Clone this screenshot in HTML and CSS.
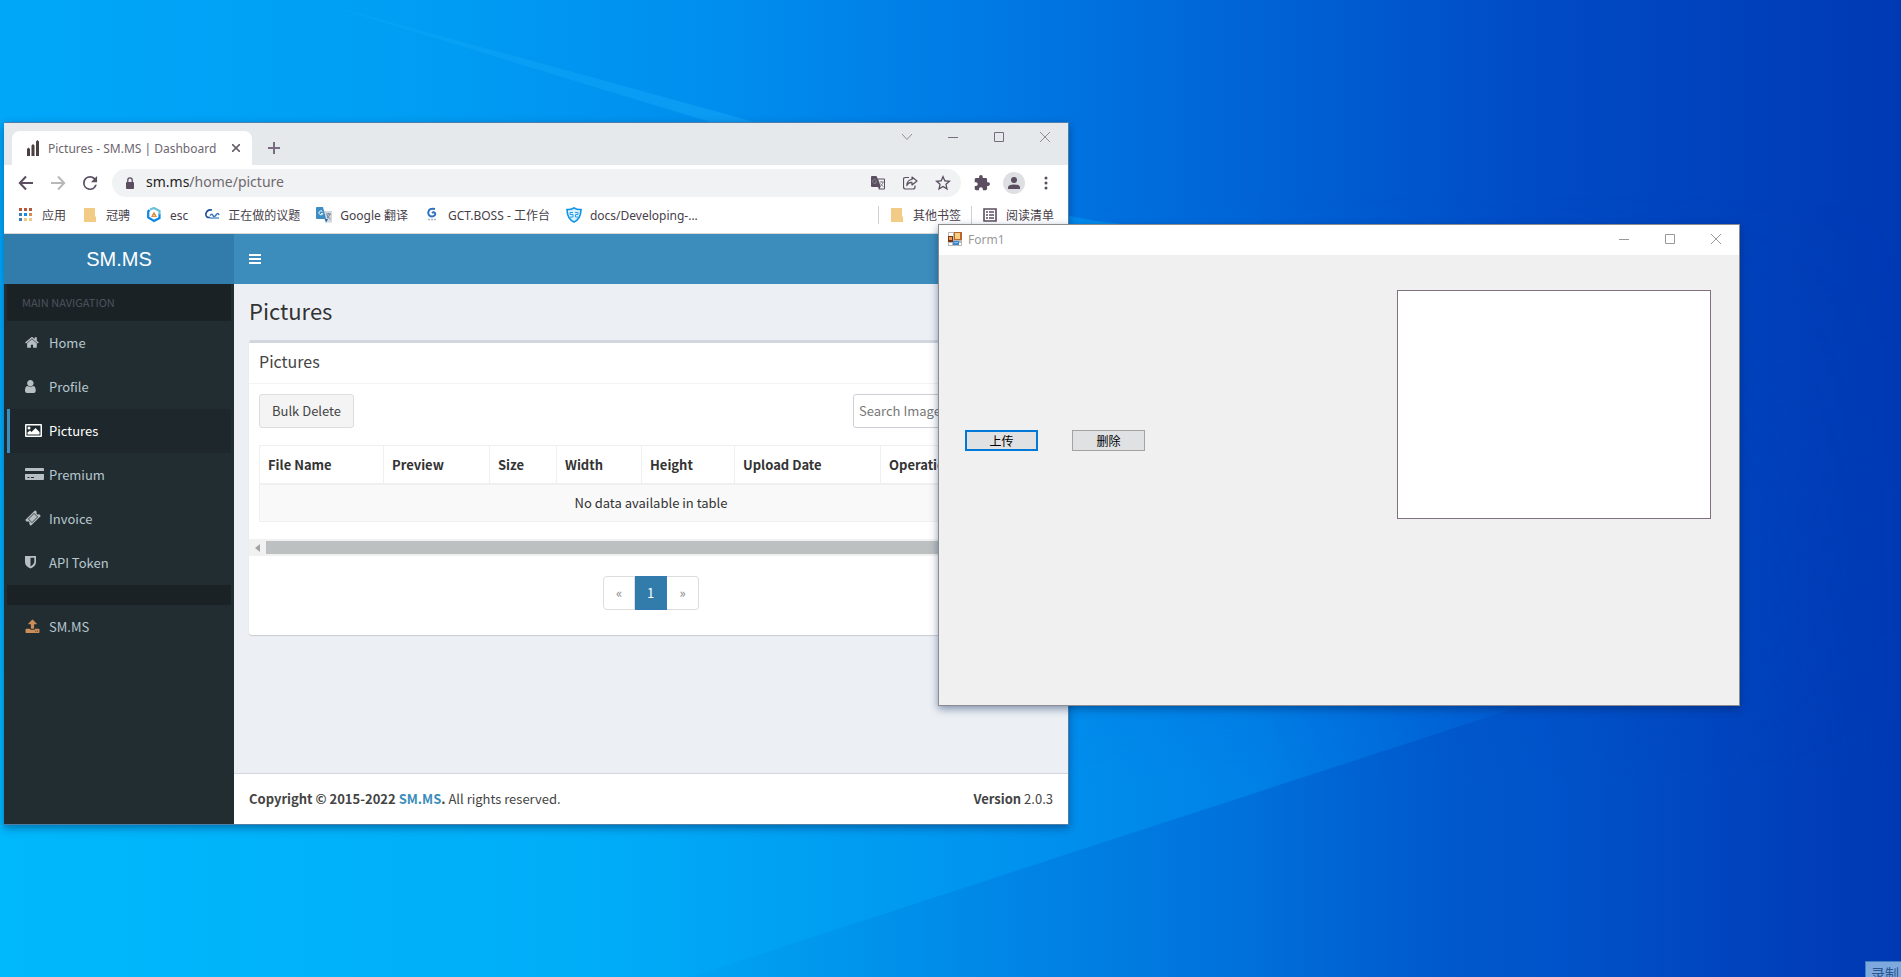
FILE: index.html
```html
<!DOCTYPE html>
<html lang="zh-CN">
  <head>
    <meta charset="utf-8" />
    <title>Pictures - SM.MS | Dashboard</title>
    <link rel="stylesheet" href="styles.css">
  </head>
  <body>
    <div class="desktop">
      <svg class="wallpaper" viewBox="0 0 1901 977" preserveAspectRatio="none" aria-hidden="true">
        <defs>
          <linearGradient id="sky" x1="0" y1="0" x2="1" y2="0">
            <stop offset="0" stop-color="#00a7f9" />
            <stop offset=".2" stop-color="#009ff4" />
            <stop offset=".38" stop-color="#008eee" />
            <stop offset=".55" stop-color="#0075e2" />
            <stop offset=".68" stop-color="#0060d4" />
            <stop offset=".8" stop-color="#004cc6" />
            <stop offset="1" stop-color="#0039b4" />
          </linearGradient>
          <linearGradient id="glow" x1="0" y1="0" x2="1" y2="0">
            <stop offset="0" stop-color="#00b8fc" />
            <stop offset=".3" stop-color="#00aef8" />
            <stop offset=".5" stop-color="#0097f0" />
            <stop offset=".66" stop-color="#0081e6" />
            <stop offset=".8" stop-color="#0062d6" stop-opacity=".7" />
            <stop offset="1" stop-color="#0039b4" stop-opacity="0" />
          </linearGradient>
          <linearGradient id="fade" x1="0" y1="0" x2="0" y2="1">
            <stop offset=".2" stop-color="#000" />
            <stop offset=".8" stop-color="#fff" />
          </linearGradient>
          <linearGradient id="shade" x1="690" y1="0" x2="1720" y2="0" gradientUnits="userSpaceOnUse">
            <stop offset="0" stop-color="#0070d0" stop-opacity=".05" />
            <stop offset=".4" stop-color="#0062d0" stop-opacity=".35" />
            <stop offset=".75" stop-color="#0050c4" stop-opacity=".6" />
            <stop offset="1" stop-color="#0044bc" stop-opacity="0" />
          </linearGradient>
          <linearGradient id="beam" x1="300" y1="0" x2="1150" y2="0" gradientUnits="userSpaceOnUse">
            <stop offset="0" stop-color="#20b4ff" stop-opacity=".1" />
            <stop offset=".5" stop-color="#20b4ff" stop-opacity=".35" />
            <stop offset="1" stop-color="#0098f8" stop-opacity="0" />
          </linearGradient>
          <mask id="lower"><rect width="1901" height="977" fill="url(#fade)" /></mask>
        </defs>
        <rect width="1901" height="977" fill="url(#sky)" />
        <rect width="1901" height="977" fill="url(#glow)" mask="url(#lower)" />
        <path d="M310 0L740 118L1140 234L1060 234L710 122Z" fill="url(#beam)" />
        <path d="M1060 213Q1085 222 1150 226L1060 226Z" fill="#00a0f8" opacity=".5" />
        <path d="M690 977L1525 705L1720 642V977Z" fill="url(#shade)" />
      </svg>

      <section class="window browser" aria-label="Pictures - SM.MS | Dashboard">
        <div class="tab-strip">
          <div class="tab">
            <svg class="favicon" viewBox="0 0 12 16"><path d="M0 9l1.500-1.500L3 9v7H0zM4.500 5.500L6 4l1.500 1.500V16h-3zM9 1.500L10.500 0 12 1.500V16H9z" fill="#4a4040" /></svg>
            <span class="tab-title">Pictures - SM.MS | Dashboard</span>
            <button class="plain tab-close" aria-label="Close tab"><svg width="8" height="8" viewBox="0 0 8 8"><path d="M0 0l8 8M8 0L0 8" stroke="#6a606c" stroke-width="1.600" /></svg></button>
          </div>
          <button class="plain new-tab" aria-label="New tab"><svg width="12" height="12" viewBox="0 0 12 12"><path d="M6 0v12M0 6h12" stroke="#7a6c80" stroke-width="2" /></svg></button>
          <div class="caption-buttons">
            <button class="plain" aria-label="Search tabs"><svg width="10" height="10" viewBox="0 0 10 10"><path d="M0 2l5 5.500L10 2" fill="none" stroke="#938c98" /></svg></button>
            <button class="plain" aria-label="Minimize"><svg width="10" height="10" viewBox="0 0 10 10"><path d="M0 5.500h10" stroke="#7a6c80" /></svg></button>
            <button class="plain" aria-label="Maximize"><svg width="10" height="10" viewBox="0 0 10 10"><path d="M.5.5h9v9h-9z" fill="none" stroke="#7a6c80" /></svg></button>
            <button class="plain" aria-label="Close"><svg width="10" height="10" viewBox="0 0 10 10"><path d="M0 0l10 10M10 0L0 10" stroke="#938c98" /></svg></button>
          </div>
        </div>

        <div class="toolbar">
          <button class="plain nav-button" aria-label="Back"><svg width="16" height="16" viewBox="0 0 16 16"><path d="M15 8H2M8 1.500L1.800 8 8 14.500" fill="none" stroke="#5a4e60" stroke-width="2" /></svg></button>
          <button class="plain nav-button" aria-label="Forward"><svg width="16" height="16" viewBox="0 0 16 16"><path d="M1 8h13M8 1.500L14.200 8 8 14.500" fill="none" stroke="#b8b8ba" stroke-width="2" /></svg></button>
          <button class="plain nav-button" aria-label="Reload"><svg width="24" height="24" viewBox="0 0 24 24"><path d="M17.650 6.350A7.960 7.960 0 0 0 12 4a8 8 0 1 0 7.730 10h-2.080A6 6 0 1 1 12 6c1.660 0 3.140.69 4.220 1.780L13 11h7V4z" fill="#5a4e60" transform="translate(1.500 1.500) scale(.88)" /></svg></button>
          <div class="address">
            <svg class="lock" width="8" height="12" viewBox="0 0 8 12"><path d="M1 5h6q1 0 1 1v5q0 1-1 1H1q-1 0-1-1V6q0-1 1-1z" fill="#5a4e60" /><path d="M1.800 5V3a2.200 2.200 0 0 1 4.400 0V5" fill="none" stroke="#5a4e60" stroke-width="1.300" /></svg>
            <span class="url"><b>sm.ms</b>/home/picture</span>
            <button class="plain" aria-label="Translate"><svg width="15" height="14" viewBox="0 0 15 14"><path d="M1 0h4.500l1 2.500H13q1 0 1 1v9q0 1-1 1H8L7 11H1q-1 0-1-1V1q0-1 1-1z" fill="#5a4e60" /><path d="M7.200 3.500h5.800v9H8.700l1-2z" fill="#f1f2f4" /><path d="M5.200 4.200a2 2 0 1 0 .4 1.600H4M8.500 6h4.500M10.800 5v1M12.300 6q-1 3-3 4M9.500 7.500q1 2 3 3" fill="none" stroke="#8c8490" /></svg></button>
            <button class="plain" aria-label="Share"><svg width="15" height="14" viewBox="0 0 15 14"><path d="M6 1.500H2.500q-2 0-2 2v7.500q0 2 2 2H10q2 0 2-2V9.500" fill="none" stroke="#5a4e60" stroke-width="1.200" /><path d="M9 1l5 4-5 4V6.500Q5.500 6.200 3.800 9.500 4 4 9 3.500z" fill="none" stroke="#5a4e60" stroke-width="1.200" stroke-linejoin="round" /></svg></button>
            <button class="plain" aria-label="Bookmark"><svg width="16" height="16" viewBox="2 2 20 20"><path d="M22 9.240l-7.190-.62L12 2 9.190 8.630 2 9.240l5.460 4.730L5.820 21 12 17.270 18.180 21l-1.630-7.030zM12 15.400l-3.760 2.270 1-4.280-3.320-2.880 4.380-.38L12 6.100l1.710 4.040 4.380.38-3.320 2.880 1 4.280z" fill="#5a4e60" /></svg></button>
          </div>
          <button class="plain ext-button" aria-label="Extensions"><svg width="16" height="16" viewBox="1 1 22 22"><path d="M20.500 11H19V7a2 2 0 0 0-2-2h-4V3.500a2.500 2.500 0 0 0-5 0V5H4a2 2 0 0 0-2 2v3.800h1.500a2.700 2.700 0 0 1 0 5.400H2V20a2 2 0 0 0 2 2h3.800v-1.500a2.700 2.700 0 0 1 5.400 0V22H17a2 2 0 0 0 2-2v-4h1.500a2.500 2.500 0 0 0 0-5z" fill="#5a4e60" /></svg></button>
          <button class="plain avatar" aria-label="Profile"><svg width="12" height="12" viewBox="0 0 12 12"><circle cx="6" cy="3" r="3" fill="#5a4e60" /><path d="M0 12v-1.500Q0 7.500 6 7.500t6 3V12z" fill="#5a4e60" /></svg></button>
          <button class="plain menu-button" aria-label="Menu"><svg width="4" height="14" viewBox="0 0 4 14"><g fill="#5a4e60"><circle cx="2" cy="2" r="1.500" /><circle cx="2" cy="7" r="1.500" /><circle cx="2" cy="12" r="1.500" /></g></svg></button>
        </div>

        <nav class="bookmarks" aria-label="Bookmarks">
          <a href="#"><svg viewBox="0 0 16 16"><path d="M1 1h3v3H1zM6 1h3v3H6zM11 1h3v3h-3z" fill="#b5583c" /><path d="M1 6h3v3H1z" fill="#3f7fb0" /><path d="M6 6h3v3H6z" fill="#0a8ff0" /><path d="M11 6h3v3h-3z" fill="#d48a50" /><path d="M1 11h3v3H1z" fill="#3f7fb0" /><path d="M6 11h3v3H6zM11 11h3v3h-3z" fill="#f0c888" /></svg>应用</a>
          <a href="#"><svg viewBox="0 0 16 16"><path d="M2 1h11v8.500h1V15H2z" fill="#f2cb86" /></svg>冠骋</a>
          <a href="#"><svg viewBox="0 0 16 16"><path d="M4 2.500L8 1l5.500 3v4" fill="none" stroke="#6cc0dc" stroke-width="2.200" /><path d="M3.500 3L2.200 4.500v6L8 14l5.500-3V7.500" fill="none" stroke="#0b86e4" stroke-width="2.200" /><path d="M8 4.500l3 5.500H5z" fill="#d8883c" /><path d="M7.500 8h1v1.200h-1z" fill="#fff" /></svg>esc</a>
          <a href="#"><svg viewBox="0 0 16 16"><path d="M8 3Q3 2 1.800 7q0 4 4.200 3.500" fill="none" stroke="#1c4f94" stroke-width="1.600" /><path d="M6 8.500Q8 6 9 8.500T12 8t3 0" fill="none" stroke="#3c74b8" stroke-width="1.500" /><path d="M6 11h9" stroke="#7fb0dc" stroke-width="2" /></svg>正在做的议题</a>
          <a href="#"><svg viewBox="0 0 16 16"><path d="M6 4h10v11.500H9z" fill="#d3d8e0" /><path d="M0 1q0-1 1-1h6l3 12H1q-1 0-1-1z" fill="#3c8dc4" /><path d="M9 12l1 3.500L12 12z" fill="#1f6098" /><path d="M6.500 4.600a2 2 0 1 0 .3 2H5" fill="none" stroke="#fff" /><path d="M10 7h5M12.500 6v1M14 7q-1 3-3 4M11 8q1 3 3.500 4" fill="none" stroke="#707f92" /></svg>Google 翻译</a>
          <a href="#"><svg viewBox="0 0 16 16"><path d="M11 2Q5 .5 4.200 5.500 4.500 10 9 9.300q3-.8 2-3.300-1.500-1.500-3 .2" fill="none" stroke="#2f72c0" stroke-width="2" /><path d="M4 12.500h8" stroke="#aab4c4" stroke-width="1.500" stroke-dasharray="2 1" /></svg>GCT.BOSS - 工作台</a>
          <a href="#"><svg viewBox="0 0 16 16"><path d="M8 .8Q11 2.800 15 2.500 14.800 12 8 15 1.200 12 1 2.500 5 2.800 8 .8z" fill="#d9effc" stroke="#0b93e6" stroke-width="1.600" /><path d="M7 5.500H4v2h3v2.500H4M9 5.500h3v2H9.500V10H12" fill="none" stroke="#2aa0e8" /></svg>docs/Developing-...</a>
          <span class="bookmark-spacer"></span>
          <a class="divided" href="#"><svg viewBox="0 0 16 16"><path d="M2 1h11v8.500h1V15H2z" fill="#f2cb86" /></svg>其他书签</a>
          <a class="divided" href="#"><svg viewBox="0 0 16 16"><path d="M2 2h12v12H2z" fill="none" stroke="#5a4e60" stroke-width="1.600" /><path d="M4 5h2M7 5h5M4 8h2M7 8h5M4 11h2M7 11h5" stroke="#5a4e60" stroke-width="1.400" /></svg>阅读清单</a>
        </nav>

        <div class="page">
          <aside class="sidebar">
            <a class="logo" href="#">SM.MS</a>
            <ul class="sidebar-menu">
              <li class="header">MAIN NAVIGATION</li>
              <li><a href="#"><svg viewBox="0 0 1792 1792"><path d="M1408 992v480q0 26-19 45t-45 19h-384v-384h-256v384h-384q-26 0-45-19t-19-45v-480l1-6 575-474 575 474zm223-69l-62 74q-8 9-21 11h-3q-13 0-21-7l-692-577-692 577q-12 8-24 7-13-2-21-11l-62-74q-8-10-7-23t11-22l719-599q32-26 76-26t76 26l244 204v-195q0-14 9-23t23-9h192q14 0 23 9t9 23v408l219 182q10 8 11 22t-7 23z" /></svg>Home</a></li>
              <li><a href="#"><svg viewBox="256 0 1792 1792"><path d="M1536 1399q0 109-62 187t-151 78H469q-88 0-150-78t-63-187q0-85 9-160t31-152 59-131 94-89 134-35q131 128 313 128t313-128q76 0 134 35t94 89 59 131 31 152 9 160zM1280 512q0 159-112 272T896 896 624 784 512 512t112-272 272-112 272 112 112 272z" /></svg>Profile</a></li>
              <li class="active"><a href="#"><svg viewBox="0 0 20 16"><path fill-rule="evenodd" d="M1 2h15q1 0 1 1v11q0 1-1 1H1q-1 0-1-1V3q0-1 1-1zm.500 1.500v10h14v-10z" /><circle cx="4" cy="6" r="1.500" /><path d="M2.500 12.500v-2L5 8.500l1.500 1.500 4-4 4 4v2.500z" /></svg>Pictures</a></li>
              <li><a href="#"><svg viewBox="0 0 20 16"><path d="M1 2h17q1 0 1 1v2H0V3q0-1 1-1zM0 8h19v5q0 1-1 1H1q-1 0-1-1z" /><path d="M2.500 11.500h2M6 11.500h3" stroke="#222d32" /></svg>Premium</a></li>
              <li><a href="#"><svg viewBox="0 0 20 16"><g transform="rotate(-45 8 8)"><path d="M1 4h14v2.500a1.500 1.500 0 0 0 0 3V12H1V9.500a1.500 1.500 0 0 0 0-3z" /><path d="M4 5.500h8v5H4z" fill="none" stroke="#222d32" stroke-width=".8" /></g></svg>Invoice</a></li>
              <li><a href="#"><svg viewBox="0 0 20 16"><path fill-rule="evenodd" d="M0 2h11v6q0 4-5.500 6.500Q0 12 0 8zm5.500 1.800v8.600Q9.300 10 9.300 8V3.800z" /></svg>API Token</a></li>
              <li class="header empty"></li>
              <li class="orange"><a href="#"><svg viewBox="0 0 1792 1792"><path d="M1728 1248v320q0 40-28 68t-68 28H160q-40 0-68-28t-28-68v-320q0-40 28-68t68-28h427q21 56 71 92t110 36h256q61 0 111-36t70-92h427q40 0 68 28t28 68zM1403 600q-17 40-59 40h-256v448q0 26-19 45t-45 19H768q-26 0-45-19t-19-45V640H448q-42 0-59-40-17-39 14-69l448-448q18-19 45-19t45 19l448 448q31 30 14 69z" /><path d="M1220 1450h110M1450 1450h110" stroke="#222d32" stroke-width="100" /></svg>SM.MS</a></li>
            </ul>
          </aside>

          <div class="main">
            <div class="navbar">
              <button class="plain toggle" aria-label="Toggle navigation"><svg width="12" height="10" viewBox="0 0 12 10"><path d="M0 1h12M0 5h12M0 9h12" stroke="#fff" stroke-width="2" /></svg></button>
            </div>
            <main class="content">
              <h1>Pictures</h1>
              <section class="box">
                <h2>Pictures</h2>
                <div class="box-body">
                  <div class="actions">
                    <button class="bulk-delete">Bulk Delete</button>
                    <input class="search" type="text" placeholder="Search Image" aria-label="Search Image" />
                  </div>
                  <table class="files">
                    <colgroup>
                      <col class="col-name" /><col class="col-preview" /><col class="col-size" /><col class="col-width" /><col class="col-height" /><col class="col-date" /><col />
                    </colgroup>
                    <thead>
                      <tr><th>File Name</th><th>Preview</th><th>Size</th><th>Width</th><th>Height</th><th>Upload Date</th><th>Operation</th></tr>
                    </thead>
                    <tbody>
                      <tr><td colspan="7">No data available in table</td></tr>
                    </tbody>
                  </table>
                </div>
                <div class="scrollbar" aria-hidden="true">
                  <svg width="5" height="8" viewBox="0 0 5 8"><path d="M5 0v8L0 4z" fill="#a3a3a3" /></svg>
                  <div class="thumb"></div>
                </div>
                <nav class="pagination" aria-label="Pages">
                  <a href="#">«</a><a class="current" href="#">1</a><a href="#">»</a>
                </nav>
              </section>
            </main>
            <footer class="footer">
              <span><strong>Copyright © 2015-2022 <a href="#">SM.MS</a>.</strong> All rights reserved.</span>
              <span><strong>Version</strong> 2.0.3</span>
            </footer>
          </div>
        </div>
      </section>

      <section class="window form" aria-label="Form1">
        <div class="title-bar">
          <svg width="14" height="14" viewBox="0 0 14 14"><path d="M0 0h14v14H0z" fill="#b9b9b9" /><path d="M1 1h4v3H1zM1 11h3v2H1zM11 11h2v2h-2z" fill="#fff" /><path d="M6 0h8v8H6z" fill="#b86430" /><path d="M7 1h5v6H7z" fill="#f4cf80" /><path d="M0 4h5v6H0z" fill="#7a3418" /><path d="M1 5h3v3H1z" fill="#e89a50" /><path d="M5 9h6v4H5z" fill="#3c86cc" /><path d="M6 10h4v1H6z" fill="#8cc0ee" /></svg>
          <span>Form1</span>
          <div class="caption-buttons">
            <button class="plain" aria-label="Minimize"><svg width="10" height="10" viewBox="0 0 10 10"><path d="M0 5.500h10" stroke="#999" /></svg></button>
            <button class="plain" aria-label="Maximize"><svg width="10" height="10" viewBox="0 0 10 10"><path d="M.5.5h9v9h-9z" fill="none" stroke="#999" /></svg></button>
            <button class="plain" aria-label="Close"><svg width="10" height="10" viewBox="0 0 10 10"><path d="M0 0l10 10M10 0L0 10" stroke="#999" /></svg></button>
          </div>
        </div>
        <div class="form-body">
          <div class="form-buttons">
            <button class="default">上传</button>
            <button>删除</button>
          </div>
          <div class="picture-box"></div>
        </div>
      </section>

      <button class="record">录制</button>
    </div>
  </body>
</html>
```
FILE: styles.css
```css
* {
  box-sizing: border-box;
}
body {
  margin: 0;
  font-family: 'Noto Sans CJK SC', sans-serif;
  font-size: 13px;
  color: #333;
}
a {
  color: inherit;
  text-decoration: none;
}
button,
input {
  font: inherit;
  color: inherit;
}
svg {
  flex: none;
}
.desktop {
  position: relative;
  height: 100vh;
  overflow: hidden;
  background: #0078e0;
}
.wallpaper {
  display: block;
  width: 100%;
  height: 100%;
}
.window {
  position: absolute;
  display: flex;
  flex-direction: column;
  box-shadow: 0 3px 8px rgba(0, 30, 80, 0.45);
}
.plain {
  display: flex;
  align-items: center;
  justify-content: center;
  padding: 0;
  border: 0;
  background: none;
}

/* browser window */
.browser {
  left: 4px;
  top: 122px;
  width: 1065px;
  height: 703px;
  border: 1px solid #4d7fa8;
  border-left: 0;
  background: #fff;
}
.tab-strip {
  display: flex;
  height: 42px;
  padding: 8px 0 0 8px;
  background: #e6e9ec;
  font-family: 'Noto Sans', 'Noto Sans CJK SC', sans-serif;
  font-size: 12px;
}
.tab {
  display: flex;
  align-items: center;
  width: 240px;
  padding: 0 12px 0 15px;
  border-radius: 8px 8px 0 0;
  background: #fff;
  color: #6d6570;
}
.favicon {
  width: 12px;
  height: 16px;
  margin-right: 9px;
}
.tab-title {
  flex: 1;
  white-space: nowrap;
}
.new-tab {
  width: 44px;
}
.caption-buttons {
  display: flex;
  margin-left: auto;
}
.caption-buttons .plain {
  width: 46px;
}
.tab-strip .caption-buttons {
  height: 12px;
}
.toolbar {
  display: flex;
  align-items: center;
  height: 36px;
  padding: 0 12px 0 6px;
}
.nav-button {
  width: 32px;
}
.address {
  display: flex;
  flex: 1;
  align-items: center;
  gap: 17px;
  height: 28px;
  margin-left: 6px;
  padding: 0 10px 0 14px;
  border-radius: 14px;
  background: #f1f2f4;
}
.lock {
  margin-right: -5px;
}
.url {
  flex: 1;
  font-family: 'Noto Sans', 'Noto Sans CJK SC', sans-serif;
  font-size: 14px;
  line-height: 18px;
  padding-bottom: 2px;
  color: #70686f;
}
.url b {
  font-weight: normal;
  color: #222;
}
.ext-button {
  width: 42px;
}
.avatar {
  width: 22px;
  height: 22px;
  border-radius: 50%;
  background: #dedfe3;
}
.menu-button {
  width: 20px;
  margin-left: 11px;
}
.bookmarks {
  display: flex;
  align-items: center;
  height: 33px;
  padding: 0 4px 4px 6px;
  border-bottom: 1px solid #d8d8d8;
  font-family: 'Noto Sans', 'Noto Sans CJK SC', sans-serif;
  font-size: 12px;
  color: #47404a;
}
.bookmarks a {
  display: flex;
  align-items: center;
  gap: 8px;
  padding: 0 8px;
  white-space: nowrap;
}
.bookmarks a svg {
  width: 16px;
  height: 16px;
}
.bookmark-spacer {
  flex: 1;
}
.bookmarks .divided {
  padding: 0 10px;
  border-left: 1px solid #cfcfd4;
}

/* dashboard page */
.page {
  display: flex;
  flex: 1;
  min-height: 0;
}
.sidebar {
  width: 230px;
  background: #222d32;
  color: #b8c7ce;
}
.logo {
  display: block;
  background: #327cab;
  font-family: 'Liberation Sans', sans-serif;
  font-size: 20px;
  line-height: 50px;
  text-align: center;
  color: #fff;
}
.sidebar-menu {
  margin: 0;
  padding: 0 3px;
  list-style: none;
}
.sidebar-menu a {
  display: flex;
  align-items: center;
  gap: 4px;
  height: 44px;
  padding: 0 0 2px 15px;
  border-left: 3px solid transparent;
}
.sidebar-menu svg {
  width: 20px;
  height: 16px;
  fill: #b8bfc2;
}
.sidebar-menu svg[viewBox$='1792 1792'] {
  width: 15px;
  height: 15px;
  margin-right: 5px;
}
.sidebar-menu .header {
  height: 37px;
  padding-left: 15px;
  background: #1a2226;
  font-size: 11px;
  line-height: 37px;
  color: #4f525c;
}
.sidebar-menu .empty {
  height: 20px;
}
.sidebar-menu .active a {
  border-left-color: #3c8dbc;
  background: #1e282c;
  color: #fff;
}
.sidebar-menu .active svg {
  fill: #fff;
}
.sidebar-menu .orange svg {
  fill: #cd8d59;
}
.main {
  display: flex;
  flex: 1;
  flex-direction: column;
  min-width: 0;
  background: #ecf0f5;
}
.navbar {
  display: flex;
  height: 50px;
  background: #3c8dbc;
}
.toggle {
  width: 42px;
}
.content {
  flex: 1;
  padding: 13px 15px 0;
}
.content h1 {
  margin: 0 0 17px;
  font-size: 22px;
  font-weight: normal;
  line-height: 26px;
}
.box {
  border-top: 3px solid #d2d6de;
  border-radius: 3px;
  background: #fff;
  box-shadow: 0 1px 1px rgba(0, 0, 0, 0.15);
}
.box h2 {
  margin: 0;
  padding: 0 10px 4px;
  border-bottom: 1px solid #f4f4f4;
  font-size: 16px;
  font-weight: normal;
  line-height: 36px;
  color: #444;
}
.box-body {
  padding: 10px 10px 17px;
}
.actions {
  display: flex;
  justify-content: space-between;
  margin-bottom: 17px;
}
.bulk-delete {
  height: 34px;
  padding: 0 12px 2px;
  border: 1px solid #ddd;
  border-radius: 3px;
  background: #f4f4f4;
  color: #444;
}
.search {
  width: 190px;
  height: 34px;
  padding: 0 5px 2px;
  border: 1px solid #ccd0d6;
  border-radius: 3px;
}
.search::placeholder {
  color: #777;
}
.files {
  width: 100%;
  border: 1px solid #f4f4f4;
  border-collapse: collapse;
  table-layout: fixed;
}
.files th,
.files td {
  height: 38px;
  padding: 0 8px;
  border: 1px solid #f0f0f0;
  text-align: left;
}
.files th {
  border-bottom-width: 2px;
}
.files td {
  background: #f9f9f9;
  text-align: center;
}
.col-name { width: 124px; }
.col-preview { width: 106px; }
.col-size { width: 67px; }
.col-width { width: 85px; }
.col-height { width: 93px; }
.col-date { width: 146px; }
.scrollbar {
  display: flex;
  align-items: center;
  gap: 6px;
  height: 17px;
  padding: 0 17px 0 6px;
  background: #f1f1f1;
}
.thumb {
  flex: 1;
  height: 13px;
  background: #bcc0c1;
}
.pagination {
  display: flex;
  justify-content: center;
  padding: 20px 0 25px;
}
.pagination a {
  width: 32px;
  height: 34px;
  border: 1px solid #ddd;
  border-radius: 4px 0 0 4px;
  line-height: 32px;
  text-align: center;
  color: #888;
}
.pagination a + a {
  border-left: 0;
  border-radius: 0 4px 4px 0;
}
.pagination .current {
  border-color: #337ab7;
  border-radius: 0;
  background: #327cab;
  color: #fff;
}
.footer {
  display: flex;
  align-items: center;
  justify-content: space-between;
  height: 51px;
  padding: 0 15px 2px;
  border-top: 1px solid #d2d6de;
  background: #fff;
  color: #444;
}
.footer a {
  color: #3c8dbc;
}

/* Form1 */
.form {
  left: 938px;
  top: 224px;
  width: 802px;
  height: 482px;
  border: 1px solid #8c8c90;
  background: #f0f0f0;
}
.title-bar {
  display: flex;
  gap: 6px;
  align-items: center;
  height: 30px;
  padding: 0 0 2px 9px;
  background: #fff;
  font-family: 'Noto Sans', sans-serif;
  font-size: 12px;
  color: #999;
}
.form-body {
  display: flex;
  align-items: flex-start;
  justify-content: space-between;
  padding: 35px 28px 0 26px;
}
.form-buttons {
  display: flex;
  gap: 34px;
  padding-top: 140px;
}
.form-buttons button {
  width: 73px;
  height: 21px;
  padding: 0;
  border: 1px solid #a3a3a3;
  background: #dfe1e3;
  font-size: 12px;
  line-height: 17px;
  color: #000;
}
.form-buttons .default {
  border: 2px solid #0078d7;
}
.picture-box {
  width: 314px;
  height: 229px;
  border: 1px solid #807080;
  background: #fff;
}
.record {
  position: absolute;
  right: -4px;
  bottom: -8px;
  height: 24px;
  padding: 0 5px;
  border: 1px solid #4080c0;
  background: #7da9de;
  font-size: 14px;
  line-height: 22px;
  color: #2a5590;
}
```
